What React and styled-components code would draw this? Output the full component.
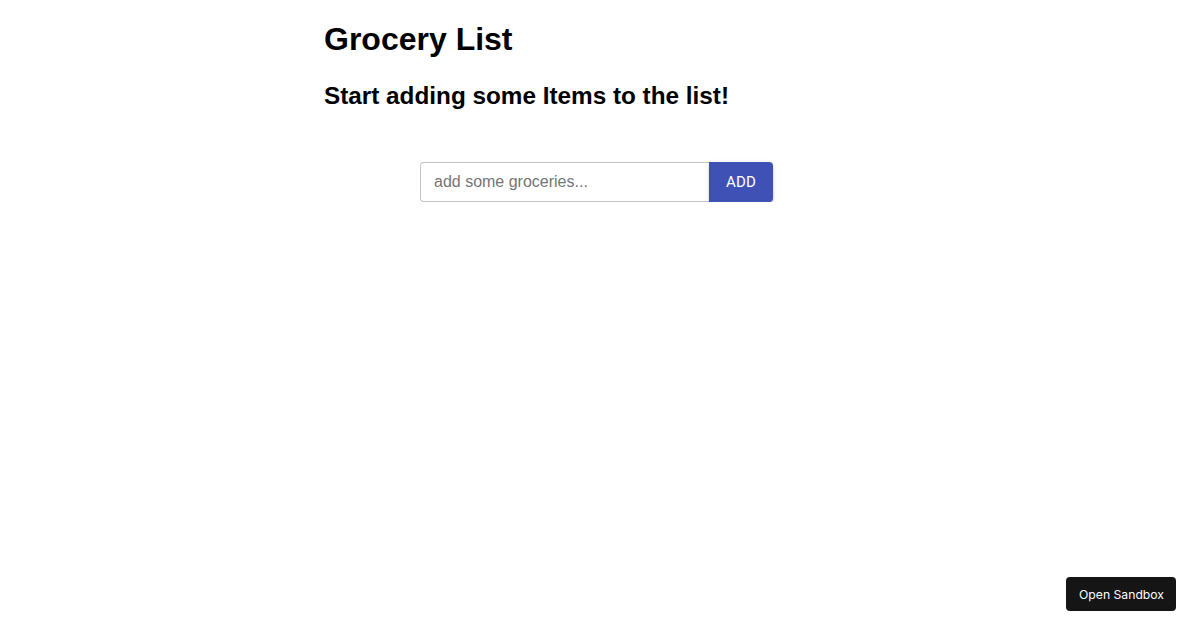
import React, { useState } from 'react'
import styled, { createGlobalStyle } from 'styled-components'

const GlobalStyle = createGlobalStyle`
  body{
    margin:0;
    background:#fff;
    font-family:"Liberation Sans", Arial, sans-serif;
    color:#000;
  }
`

const Page = styled.div`
  width:552px;
  margin:0 auto;
`

const Title = styled.h1`
  font-size:32px;
  font-weight:bold;
  margin:21.44px 0;
`

const SubTitle = styled.h2`
  font-size:24.3px;
  font-weight:bold;
  margin:24px 0 0;
`

const AddForm = styled.form`
  display:flex;
  padding:52px 0 0 96px;
`

const ItemInput = styled.input`
  box-sizing:border-box;
  width:289px;
  height:40px;
  padding:0 13px;
  border:1px solid #c4c4c4;
  border-right:none;
  border-radius:4px 0 0 4px;
  font-family:"Liberation Sans", Arial, sans-serif;
  font-size:16px;
  outline:none;
  &::placeholder{
    color:#757575;
  }
`

const AddButton = styled.button`
  width:64px;
  height:40px;
  border:none;
  border-radius:0 4px 4px 0;
  background:#3f51b5;
  color:#fff;
  font-family:Roboto, sans-serif;
  font-size:15px;
  letter-spacing:0.2px;
  cursor:pointer;
  box-shadow:0 3px 1px -2px rgba(0,0,0,0.2), 0 2px 2px 0 rgba(0,0,0,0.14), 0 1px 5px 0 rgba(0,0,0,0.12);
`

const SandboxLink = styled.a`
  position:fixed;
  right:24px;
  bottom:19px;
  padding:0 12px 0 13px;
  height:34px;
  display:flex;
  align-items:center;
  background:#151515;
  color:#fff;
  border-radius:4px;
  font-family:Inter, sans-serif;
  font-size:12.2px;
  text-decoration:none;
`

const App = () => {
  const [item, setItem] = useState('')
  const [items, setItems] = useState([])

  const submitHandler = (e) => {
    e.preventDefault()
    if (!item.trim()) return
    setItems([...items, item])
    setItem('')
  }

  return (
    <>
      <GlobalStyle />
      <Page>
        <Title>Grocery List</Title>
        <SubTitle>
          {items.length === 0 ? 'Start adding some Items to the list!' : `${items.length} items`}
        </SubTitle>
        <AddForm onSubmit={submitHandler}>
          <ItemInput
            type="text"
            placeholder="add some groceries..."
            value={item}
            onChange={(e) => setItem(e.target.value)}
          />
          <AddButton type="submit">ADD</AddButton>
        </AddForm>
      </Page>
      <SandboxLink href="#">Open Sandbox</SandboxLink>
    </>
  )
}

export default App
